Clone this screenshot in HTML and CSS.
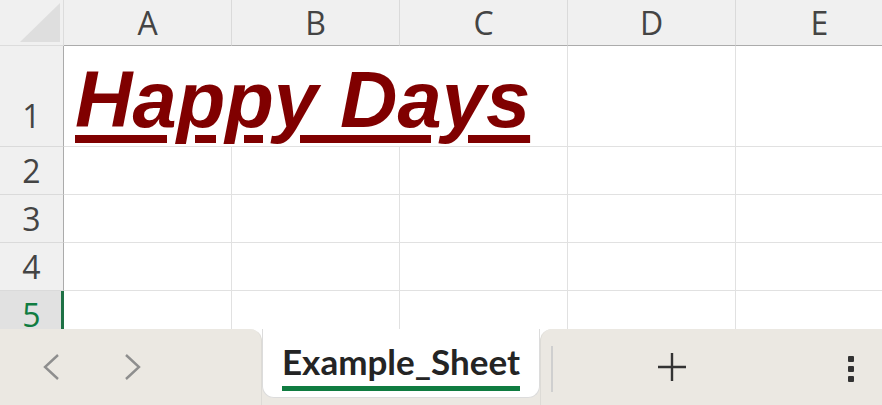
FILE: index.html
```html
<!DOCTYPE html>
<html lang="en">
<head>
<meta charset="utf-8">
<title>Example_Sheet</title>
<link rel="stylesheet" href="styles.css">
</head>
<body>
<div class="app">
  <div class="sheet">
    <div class="grid">
      <div class="corner"><div class="tri"></div></div>
      <div class="colh">A</div>
      <div class="colh">B</div>
      <div class="colh">C</div>
      <div class="colh">D</div>
      <div class="colh">E</div>

      <div class="rowh r1">1</div>
      <div class="cell title"><span class="big">Happy Days</span></div>
      <div class="cell"></div>
      <div class="cell"></div>

      <div class="rowh">2</div>
      <div class="cell"></div><div class="cell"></div><div class="cell"></div><div class="cell"></div><div class="cell"></div>

      <div class="rowh">3</div>
      <div class="cell"></div><div class="cell"></div><div class="cell"></div><div class="cell"></div><div class="cell"></div>

      <div class="rowh">4</div>
      <div class="cell"></div><div class="cell"></div><div class="cell"></div><div class="cell"></div><div class="cell"></div>

      <div class="rowh sel">5</div>
      <div class="cell last"></div><div class="cell last"></div><div class="cell last"></div><div class="cell last"></div><div class="cell last"></div>
    </div>
  </div>
  <div class="tabbar">
    <div class="panel left">
      <svg class="chev" width="16" height="26" viewBox="0 0 16 26"><polyline points="15,1 2,13 15,25" fill="none" stroke="#8e8e8e" stroke-width="2.4"/></svg>
      <svg class="chev" width="16" height="26" viewBox="0 0 16 26"><polyline points="1,1 14,13 1,25" fill="none" stroke="#8e8e8e" stroke-width="2.4"/></svg>
    </div>
    <div class="tab"><span class="label">Example_Sheet</span></div>
    <div class="panel right">
      <div class="sep"></div>
      <svg class="plus" width="28" height="28" viewBox="0 0 28 28"><path d="M14 0V28M0 14H28" stroke="#333" stroke-width="2.4" fill="none"/></svg>
      <div class="kebab"><i></i><i></i><i></i></div>
    </div>
  </div>
</div>
</body>
</html>
```

FILE: styles.css
```css
* { box-sizing: border-box; }
html, body { margin: 0; padding: 0; background: #fff; overflow: hidden; }
.app { width: 882px; height: 405px; display: flex; flex-direction: column; }

.sheet { height: 329px; overflow: hidden; background: #fff; }
.grid {
  display: grid;
  grid-template-columns: 64px repeat(5, 168px);
  grid-template-rows: 46px 101px 48px 48px 48px 39px;
  width: max-content;
}
.corner {
  background: #f0f0f0;
  border-right: 1px solid #dcdcdc;
  border-bottom: 1px solid #dcdcdc;
  position: relative;
}
.tri {
  position: absolute;
  left: 20px; top: 3px;
  width: 40px; height: 39px;
  background: #dedede;
  clip-path: polygon(0 100%, 100% 100%, 100% 0);
}
.colh {
  background: #f0f0f0;
  border-right: 1px solid #dadada;
  border-bottom: 1px solid #ababab;
  display: flex; align-items: center; justify-content: center;
  font-family: "Open Sans", "Liberation Sans", sans-serif;
  font-size: 32px; line-height: 1; color: #444;
}
.rowh {
  background: #f0f0f0;
  border-right: 1px solid #ababab;
  border-bottom: 1px solid #dadada;
  display: flex; align-items: center; justify-content: center;
  font-family: "Open Sans", "Liberation Sans", sans-serif;
  font-size: 32px; line-height: 1; color: #444;
}
.rowh.r1 { align-items: flex-end; padding-bottom: 14px; }
.rowh.sel {
  background: #e1e1e1;
  color: #107c41;
  border-right: 3px solid #1e7145;
  border-bottom: none;
  padding-left: 2px;
  align-items: flex-end;
  line-height: 26px;
  padding-bottom: 2px;
}
.cell {
  border-right: 1px solid #e1e1e1;
  border-bottom: 1px solid #e1e1e1;
}
.cell.last { border-bottom: none; }
.title {
  grid-column: span 3;
  display: flex; align-items: flex-end;
  padding: 0 0 7px 11px;
}
.big {
  font-family: "Liberation Sans", Arial, sans-serif;
  font-weight: bold; font-style: italic;
  font-size: 79.5px; line-height: 1;
  color: #800000;
  white-space: nowrap;
  text-decoration: underline;
  text-decoration-thickness: 8px;
  text-underline-offset: 8px;
}

.tabbar {
  height: 76px;
  display: flex;
  background: linear-gradient(#fff 0 20px, #ebe8e2 20px);
}
.panel { background: #ebe8e2; height: 100%; display: flex; align-items: center; }
.left {
  width: 262px;
  border-top-right-radius: 12px;
  padding-left: 43px;
  gap: 66px;
  border-right: 1px solid #dddbd6;
}
.tab {
  width: 278px; height: 69px;
  background: #fff;
  border-radius: 0 0 12px 12px;
  border: 1px solid #dcdcdc; border-top: none;
  display: flex; justify-content: center; align-items: flex-start;
}
.label {
  margin-top: 12px;
  font-family: Lato, "Open Sans", sans-serif;
  font-weight: 700; font-size: 35px; line-height: 40px;
  color: #242424;
  padding-bottom: 5px;
  border-bottom: 5px solid #107c41;
}
.right {
  flex: 1;
  border-top-left-radius: 12px;
  border-left: 1px solid #dddbd6;
}
.sep { width: 2px; height: 46px; background: #cfcfcf; margin-left: 10px; margin-top: 4px; }
.plus { margin-left: 105px; }
.kebab { margin-left: 162px; margin-top: 4px; display: flex; flex-direction: column; gap: 4px; }
.kebab i { display: block; width: 6px; height: 6px; background: #333; border-radius: 1px; }
```
